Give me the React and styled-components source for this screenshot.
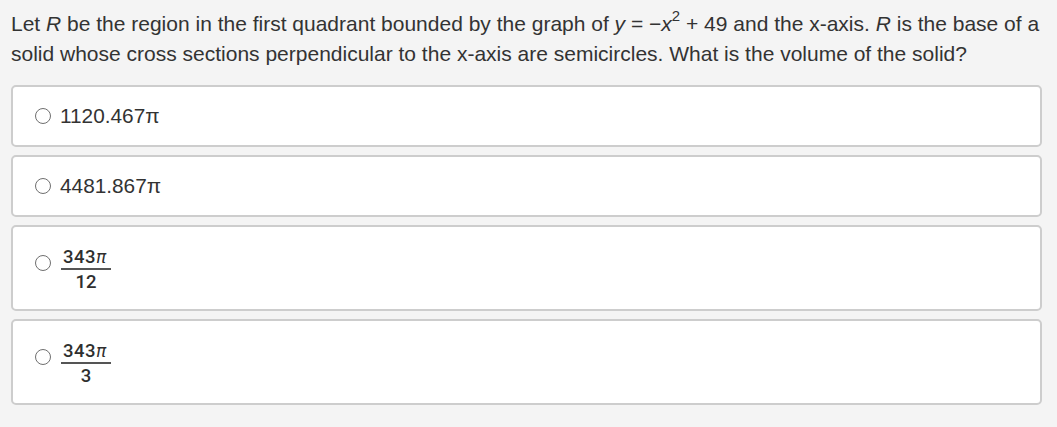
import React from 'react'
import styled, { createGlobalStyle } from 'styled-components'

const GlobalStyle = createGlobalStyle`
  html, body {
    margin: 0;
    padding: 0;
    background: #f4f4f4;
  }
  body {
    font-family: "Liberation Sans", Arial, sans-serif;
    color: #333;
  }
`

const Page = styled.div`
  padding: 9px 15px 20px 11px;
`

const Question = styled.p`
  margin: 0 0 16px;
  font-size: 21px;
  line-height: 30px;
  color: #333;

  i {
    font-style: italic;
  }

  sup {
    font-size: 15px;
    line-height: 0;
    vertical-align: 10px;
  }
`

const Choices = styled.div`
  display: flex;
  flex-direction: column;
  gap: 8px;
`

const Card = styled.label`
  display: flex;
  align-items: ${(props) => (props.tall ? 'flex-start' : 'center')};
  gap: 9px;
  background: #fff;
  border: 2px solid #cdcdcd;
  border-radius: 5px;
  padding: ${(props) => (props.tall ? '21px 22px 17px' : '16px 22px 17px')};
  cursor: pointer;
`

const Radio = styled.span`
  flex: none;
  width: 14px;
  height: 14px;
  border-radius: 50%;
  border: 1.5px solid #6f6f6f;
  background: #fff;
  margin-top: ${(props) => (props.tall ? '7px' : '0')};
`

const Answer = styled.span`
  font-size: 20.8px;
  line-height: 25px;
  color: #333;
`

const Fraction = styled.span`
  display: inline-flex;
  flex-direction: column;
  align-items: center;
  color: #2f2f2f;
  font-family: Roboto, "Liberation Sans", sans-serif;
  font-weight: 500;
  font-size: 18.5px;
  margin-left: 1px;
`

const Num = styled.span`
  line-height: 19px;
  padding: 0 4px 0 2px;
  letter-spacing: 0.5px;

  i {
    font-family: "DejaVu Sans", sans-serif;
    font-style: italic;
    font-size: 17px;
  }
`

const Bar = styled.span`
  align-self: stretch;
  height: 2px;
  background: #555;
  margin: 1px 0 2px;
`

const Den = styled.span`
  line-height: 20px;
`

const choices = [
  { text: '1120.467π' },
  { text: '4481.867π' },
  { num: '343', den: '12' },
  { num: '343', den: '3' },
]

const App = () => {
  return (
    <Page>
      <GlobalStyle />
      <Question>
        Let <i>R</i> be the region in the first quadrant bounded by the graph of <i>y</i> = −<i>x</i>
        <sup>2</sup> + 49 and the x-axis. <i>R</i> is the base of a solid whose cross sections
        perpendicular to the x-axis are semicircles. What is the volume of the solid?
      </Question>
      <Choices>
        {choices.map((c, i) => (
          <Card key={i} tall={!!c.den}>
            <Radio tall={!!c.den} />
            {c.den ? (
              <Fraction>
                <Num>
                  {c.num}
                  <i>π</i>
                </Num>
                <Bar />
                <Den>{c.den}</Den>
              </Fraction>
            ) : (
              <Answer>{c.text}</Answer>
            )}
          </Card>
        ))}
      </Choices>
    </Page>
  )
}

export default App
